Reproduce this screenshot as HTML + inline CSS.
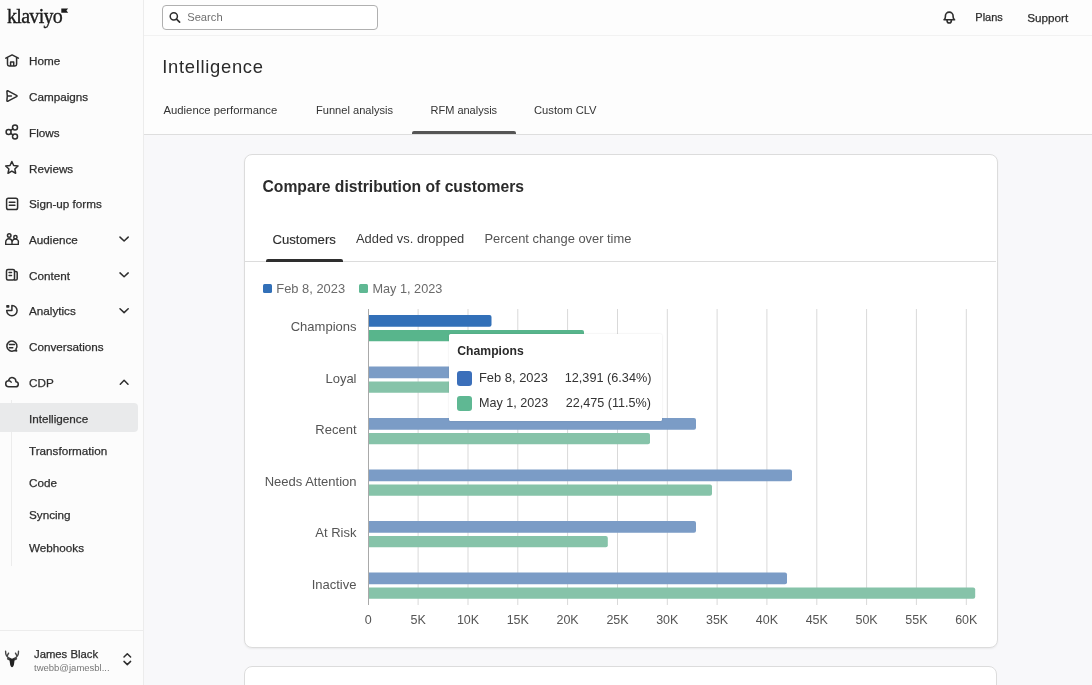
<!DOCTYPE html>
<html><head><meta charset="utf-8">
<style>
html,body{margin:0;padding:0;width:1092px;height:685px;overflow:hidden;background:#f8f8fa;}
body{position:relative;font-family:"Liberation Sans",sans-serif;color:#2a2a2a;}
.t{position:absolute;line-height:1;white-space:nowrap;}
.si{color:#2e2e2e;-webkit-text-stroke:0.25px #2e2e2e;}
</style></head>
<body><div style="position:absolute;left:0;top:0;width:1092px;height:685px;will-change:transform;">
<div style="position:absolute;left:0;top:0;width:143px;height:685px;background:#fcfcfc;border-right:1px solid #ececec;"></div>
<div class="t" style="left:7px;top:5.95px;font-family:'Liberation Serif',serif;font-size:20px;letter-spacing:-0.7px;color:#1c1c1c;-webkit-text-stroke:0.35px #1c1c1c;">klaviyo</div>
<svg style="position:absolute;left:0;top:0" width="80" height="30"><path d="M61.3 8.4H68.2L66.4 10.55L68.2 12.7H61.3Z" fill="#1c1c1c"/></svg>
<div class="t si" style="left:29px;top:55.25px;font-size:11.7px;">Home</div>
<div class="t si" style="left:29px;top:91.25px;font-size:11.7px;">Campaigns</div>
<div class="t si" style="left:29px;top:127.05px;font-size:11.7px;">Flows</div>
<div class="t si" style="left:29px;top:162.85px;font-size:11.7px;">Reviews</div>
<div class="t si" style="left:29px;top:198.15px;font-size:11.7px;">Sign-up forms</div>
<div class="t si" style="left:29px;top:233.95px;font-size:11.7px;">Audience</div>
<div class="t si" style="left:29px;top:269.75px;font-size:11.7px;">Content</div>
<div class="t si" style="left:29px;top:305.45px;font-size:11.7px;">Analytics</div>
<div class="t si" style="left:29px;top:340.85px;font-size:11.7px;">Conversations</div>
<div class="t si" style="left:29px;top:377.05px;font-size:11.7px;">CDP</div>
<div style="position:absolute;left:11px;top:400px;width:1px;height:166px;background:#ececec;"></div>
<div style="position:absolute;left:0;top:402.5px;width:138px;height:29.5px;background:#e9eaeb;border-radius:0 4px 4px 0;"></div>
<div class="t si" style="left:29px;top:412.85px;font-size:11.7px;">Intelligence</div>
<div class="t si" style="left:29px;top:444.75px;font-size:11.7px;">Transformation</div>
<div class="t si" style="left:29px;top:476.85px;font-size:11.7px;">Code</div>
<div class="t si" style="left:29px;top:509.45px;font-size:11.7px;">Syncing</div>
<div class="t si" style="left:29px;top:541.75px;font-size:11.7px;">Webhooks</div>
<div style="position:absolute;left:0;top:630px;width:143px;height:1px;background:#ececec;"></div>
<div class="t si" style="left:34px;top:649.03px;font-size:11.3px;">James Black</div>
<div class="t" style="left:34px;top:662.96px;font-size:9.5px;color:#777;">twebb@jamesbl...</div>
<div style="position:absolute;left:144px;top:0;width:948px;height:35px;background:#fdfdfd;border-bottom:1px solid #f2f2f2;"></div>
<div style="position:absolute;left:161.9px;top:5.2px;width:214.2px;height:22.6px;border:1px solid #b0b0b0;border-radius:4px;background:#fff;"></div>
<div class="t" style="left:187.2px;top:12.12px;font-size:11.2px;color:#6f6f6f;">Search</div>
<div class="t si" style="left:975.3px;top:12.49px;font-size:11px;">Plans</div>
<div class="t si" style="left:1027.3px;top:11.90px;font-size:11.7px;">Support</div>
<div style="position:absolute;left:144px;top:36px;width:948px;height:98px;background:#fdfdfd;border-bottom:1px solid #dedede;"></div>
<div class="t" style="left:162.2px;top:58.22px;font-size:18.4px;color:#2a2a2a;letter-spacing:0.7px;">Intelligence</div>
<div class="t" style="left:163.5px;top:105.03px;font-size:11.3px;color:#333;">Audience performance</div>
<div class="t" style="left:316px;top:105.20px;font-size:11.1px;color:#333;">Funnel analysis</div>
<div class="t" style="left:430.5px;top:105.29px;font-size:11.0px;color:#333;">RFM analysis</div>
<div class="t" style="left:534px;top:105.12px;font-size:11.2px;color:#333;">Custom CLV</div>
<div style="position:absolute;left:411.5px;top:131px;width:104px;height:3px;background:#555;border-radius:2px 2px 0 0;"></div>
<div style="position:absolute;left:244px;top:153.5px;width:751.5px;height:492.5px;background:#fff;border:1px solid #dcdcdc;border-radius:8px;box-shadow:0 1px 2px rgba(0,0,0,0.06);"></div>
<div style="position:absolute;left:244px;top:666px;width:751px;height:60px;background:#fff;border:1px solid #dcdcdc;border-radius:8px;"></div>
<div class="t" style="left:262.5px;top:179.31px;font-size:15.7px;color:#2b2b2b;font-weight:bold;">Compare distribution of customers</div>
<div class="t" style="left:272.5px;top:232.91px;font-size:13.1px;color:#2e2e2e;-webkit-text-stroke:0.15px #2e2e2e;">Customers</div>
<div class="t" style="left:356px;top:233.08px;font-size:12.9px;color:#3a3a3a;">Added vs. dropped</div>
<div class="t" style="left:484.5px;top:233.08px;font-size:12.9px;color:#555;">Percent change over time</div>
<div style="position:absolute;left:245px;top:261px;width:751px;height:1px;background:#dcdcdc;"></div>
<div style="position:absolute;left:266px;top:258.5px;width:77px;height:3px;background:#2e2e2e;border-radius:2px 2px 0 0;"></div>
<div style="position:absolute;left:262.8px;top:283.8px;width:8.8px;height:9.5px;background:#3270b8;border-radius:1.5px;"></div>
<div class="t" style="left:276.3px;top:282.58px;font-size:12.9px;color:#6a6a6a;">Feb 8, 2023</div>
<div style="position:absolute;left:359.2px;top:283.8px;width:8.8px;height:9.5px;background:#5fb893;border-radius:1.5px;"></div>
<div class="t" style="left:372.5px;top:282.75px;font-size:12.7px;color:#6a6a6a;">May 1, 2023</div>
<svg style="position:absolute;left:0;top:0;" width="1092" height="685" viewBox="0 0 1092 685">
<style>.yl{font-family:"Liberation Sans",sans-serif;font-size:13px;fill:#555;} .xl{font-family:"Liberation Sans",sans-serif;font-size:12.5px;fill:#555;}</style>
<line x1="418.1" y1="309" x2="418.1" y2="605" stroke="#d9d9d9" stroke-width="1"/>
<line x1="468.0" y1="309" x2="468.0" y2="605" stroke="#d9d9d9" stroke-width="1"/>
<line x1="517.8" y1="309" x2="517.8" y2="605" stroke="#d9d9d9" stroke-width="1"/>
<line x1="567.6" y1="309" x2="567.6" y2="605" stroke="#d9d9d9" stroke-width="1"/>
<line x1="617.5" y1="309" x2="617.5" y2="605" stroke="#d9d9d9" stroke-width="1"/>
<line x1="667.3" y1="309" x2="667.3" y2="605" stroke="#d9d9d9" stroke-width="1"/>
<line x1="717.1" y1="309" x2="717.1" y2="605" stroke="#d9d9d9" stroke-width="1"/>
<line x1="766.9" y1="309" x2="766.9" y2="605" stroke="#d9d9d9" stroke-width="1"/>
<line x1="816.8" y1="309" x2="816.8" y2="605" stroke="#d9d9d9" stroke-width="1"/>
<line x1="866.6" y1="309" x2="866.6" y2="605" stroke="#d9d9d9" stroke-width="1"/>
<line x1="916.4" y1="309" x2="916.4" y2="605" stroke="#d9d9d9" stroke-width="1"/>
<line x1="966.3" y1="309" x2="966.3" y2="605" stroke="#d9d9d9" stroke-width="1"/>
<line x1="368.5" y1="309" x2="368.5" y2="605" stroke="#a9a9a9" stroke-width="1"/>
<path d="M369 314.9h120.5a2 2 0 0 1 2 2v7.8a2 2 0 0 1 -2 2h-120.5z" fill="#3270b8"/>
<path d="M369 330.1h213.0a2 2 0 0 1 2 2v7.2a2 2 0 0 1 -2 2h-213.0z" fill="#58b58c"/>
<text x="356.5" y="331.2" text-anchor="end" class="yl">Champions</text>
<path d="M369 366.4h229.0a2 2 0 0 1 2 2v7.8a2 2 0 0 1 -2 2h-229.0z" fill="#7b9cc6"/>
<path d="M369 381.6h239.0a2 2 0 0 1 2 2v7.2a2 2 0 0 1 -2 2h-239.0z" fill="#86c3a9"/>
<text x="356.5" y="382.7" text-anchor="end" class="yl">Loyal</text>
<path d="M369 417.9h325.0a2 2 0 0 1 2 2v7.8a2 2 0 0 1 -2 2h-325.0z" fill="#7b9cc6"/>
<path d="M369 433.1h279.0a2 2 0 0 1 2 2v7.2a2 2 0 0 1 -2 2h-279.0z" fill="#86c3a9"/>
<text x="356.5" y="434.2" text-anchor="end" class="yl">Recent</text>
<path d="M369 469.4h421.0a2 2 0 0 1 2 2v7.8a2 2 0 0 1 -2 2h-421.0z" fill="#7b9cc6"/>
<path d="M369 484.6h341.0a2 2 0 0 1 2 2v7.2a2 2 0 0 1 -2 2h-341.0z" fill="#86c3a9"/>
<text x="356.5" y="485.7" text-anchor="end" class="yl">Needs Attention</text>
<path d="M369 520.9h325.0a2 2 0 0 1 2 2v7.8a2 2 0 0 1 -2 2h-325.0z" fill="#7b9cc6"/>
<path d="M369 536.1h236.8a2 2 0 0 1 2 2v7.2a2 2 0 0 1 -2 2h-236.8z" fill="#86c3a9"/>
<text x="356.5" y="537.2" text-anchor="end" class="yl">At Risk</text>
<path d="M369 572.4h416.0a2 2 0 0 1 2 2v7.8a2 2 0 0 1 -2 2h-416.0z" fill="#7b9cc6"/>
<path d="M369 587.6h604.2a2 2 0 0 1 2 2v7.2a2 2 0 0 1 -2 2h-604.2z" fill="#86c3a9"/>
<text x="356.5" y="588.7" text-anchor="end" class="yl">Inactive</text>
<text x="368.3" y="624.3" text-anchor="middle" class="xl">0</text>
<text x="418.1" y="624.3" text-anchor="middle" class="xl">5K</text>
<text x="468.0" y="624.3" text-anchor="middle" class="xl">10K</text>
<text x="517.8" y="624.3" text-anchor="middle" class="xl">15K</text>
<text x="567.6" y="624.3" text-anchor="middle" class="xl">20K</text>
<text x="617.5" y="624.3" text-anchor="middle" class="xl">25K</text>
<text x="667.3" y="624.3" text-anchor="middle" class="xl">30K</text>
<text x="717.1" y="624.3" text-anchor="middle" class="xl">35K</text>
<text x="766.9" y="624.3" text-anchor="middle" class="xl">40K</text>
<text x="816.8" y="624.3" text-anchor="middle" class="xl">45K</text>
<text x="866.6" y="624.3" text-anchor="middle" class="xl">50K</text>
<text x="916.4" y="624.3" text-anchor="middle" class="xl">55K</text>
<text x="966.3" y="624.3" text-anchor="middle" class="xl">60K</text>
</svg>
<div style="position:absolute;left:449px;top:334px;width:213px;height:86.5px;background:#fff;border-radius:1.5px;box-shadow:0 0 2px rgba(0,0,0,0.12);"></div>
<div class="t" style="left:457.3px;top:344.67px;font-size:12.2px;color:#2a2a2a;font-weight:bold;">Champions</div>
<div style="position:absolute;left:457px;top:370.5px;width:15px;height:15px;background:#3b6fba;border-radius:3px;"></div>
<div class="t" style="left:479px;top:372.28px;font-size:12.9px;color:#333;">Feb 8, 2023</div>
<div class="t" style="left:651.5px;top:372.45px;font-size:12.7px;transform:translateX(-100%);color:#333;">12,391 (6.34%)</div>
<div style="position:absolute;left:457px;top:395.8px;width:15px;height:15px;background:#5fb893;border-radius:3px;"></div>
<div class="t" style="left:479px;top:397.33px;font-size:12.6px;color:#333;">May 1, 2023</div>
<div class="t" style="left:651px;top:397.33px;font-size:12.6px;transform:translateX(-100%);color:#333;">22,475 (11.5%)</div>
<svg style="position:absolute;left:0;top:0;" width="1092" height="685" viewBox="0 0 1092 685" fill="none" stroke="#2e2e2e" stroke-width="1.5" stroke-linecap="round" stroke-linejoin="round">
<path d="M5.8 58.1L12.1 54.9L18.4 58.1M7.5 57.4V64.3Q7.5 65.9 9.1 65.9H15Q16.6 65.9 16.6 64.3V57.4M10.6 65.9V62.1H13.7V65.9"/>
<path d="M8 90.8Q6.8 90.3 6.9 91.7Q7.7 96 6.9 100.3Q6.8 101.7 8 101.2L16.5 96.7Q17.6 96 16.5 95.3Z M7.9 96H11.4"/>
<circle cx="15" cy="127.4" r="2.5"/><circle cx="8.6" cy="131.9" r="2.5"/><circle cx="15" cy="136.4" r="2.5"/>
<path d="M10.65 130.45L12.95 128.85M10.65 133.35L12.95 134.95"/>
<path d="M11.85 161.50L13.67 165.49L18.03 165.99L14.80 168.96L15.67 173.26L11.85 171.10L8.03 173.26L8.90 168.96L5.67 165.99L10.03 165.49Z"/>
<rect x="6.6" y="198.2" width="11" height="11.4" rx="1.8"/><path d="M9.3 202.3H14.9M9.3 205.2H14.9"/>
<circle cx="9.2" cy="235.5" r="1.75"/><circle cx="15.4" cy="237.2" r="1.65"/>
<path d="M5.7 244.4V242.2A3.15 3.5 0 0 1 12 242.2V244.4ZM12 244.4H18.3V243A3.05 3.2 0 0 0 12.3 241.4" stroke-width="1.4"/>
<rect x="6.5" y="269.6" width="8" height="10.4" rx="1.5"/><path d="M14.5 271.5H15.9A1.3 1.3 0 0 1 17.2 272.8V278.7A1.3 1.3 0 0 1 15.9 280H14.5M9.1 272.5H11.5M9.1 275.6H11.5"/>
<path d="M11.9 305.4A5.2 5.2 0 1 1 6.7 310.6H11.9Z"/>
<rect x="6.2" y="305" width="3.2" height="2.8" rx="0.7" fill="#2e2e2e" stroke="none"/>
<path d="M16.6 350.9L15.9 349.2A5.05 5.05 0 1 0 14.2 350.6Z"/><path d="M9.4 344.6H14.5M9.4 347.7H12.8"/>
<path d="M8.7 386.8A3 3 0 0 1 8.7 380.8A3 3 0 0 1 11.2 382.1M8.75 379.9A3.7 3.7 0 0 1 15.85 381.7A2.55 2.55 0 0 1 15.6 386.8H8.7"/>
<path d="M120 237.1L124.1 241L128.2 237.1M120 272.9L124.1 276.8L128.2 272.9M120 308.7L124.1 312.6L128.2 308.7M120.3 384.2L124.1 380.3L128 384.2"/>
<path d="M124 657L127.3 653.8L130.6 657M124 661.4L127.3 664.6L130.6 661.4"/>
<circle cx="173.8" cy="16.3" r="3.6" stroke-width="1.5"/><path d="M176.5 19.1L179.6 22.1" stroke-width="1.7"/>
<path d="M944 19.8Q945.4 18.8 945.4 16.8V16A3.85 3.9 0 0 1 953.1 16V16.8Q953.1 18.8 954.6 19.8Z M947 20.2A2.1 2.7 0 0 0 951.4 20.2" stroke-width="1.6"/>
<g stroke="#444" stroke-width="1.4">
<path d="M5.6 651.3C5.4 655 7 657.6 10.4 658.6M18.5 651.3C18.7 655 17.1 657.6 13.7 658.6M7.3 655.6L8.6 653.2M16.8 655.6L15.5 653.2M7.6 658.8L9.6 659.8M16.5 658.8L14.5 659.8"/>
</g>
<path d="M9.3 658.6H14.8L13.9 665Q12 669.6 10.2 665Z" fill="#222" stroke="none"/>
</svg>
</div></body></html>
